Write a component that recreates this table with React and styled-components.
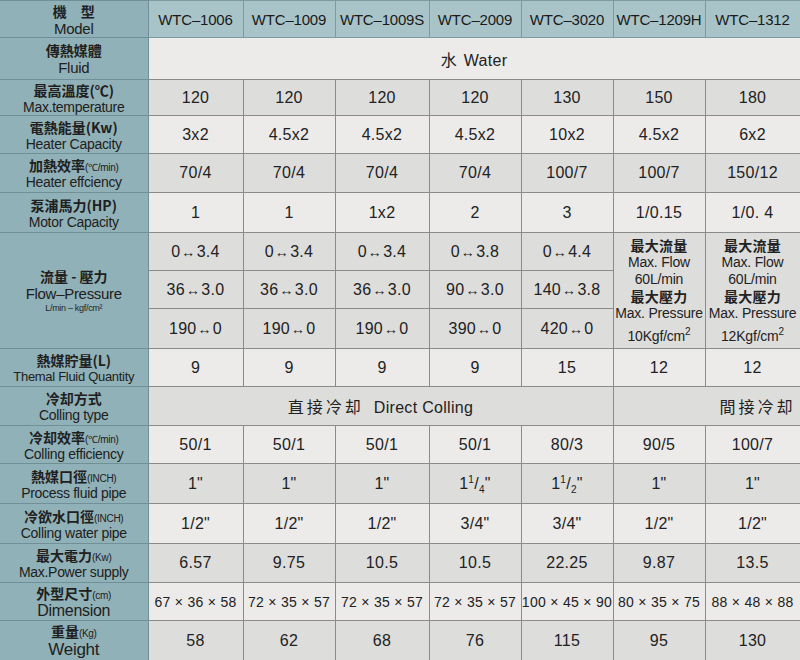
import React from 'react';
import styled, { createGlobalStyle } from 'styled-components';

const GlobalStyle = createGlobalStyle`
    html, body {
        margin: 0;
        padding: 0;
        background: #e9e9e7;
    }
    body {
        font-family: "Liberation Sans", Arial, "Noto Sans CJK TC", sans-serif;
        color: #262626;
    }
`;

const Sheet = styled.div`
    width: 800px;
    height: 660px;
    overflow: hidden;
    background: #e9e9e7;
`;

const Table = styled.table`
    width: 800px;
    border-collapse: collapse;
    table-layout: fixed;
`;

const Row = styled.tr`
    height: ${p => p.$h}px;
`;

const Label = styled.th`
    background: #90b1b7;
    border: 1px solid #6f9096;
    border-left: none;
    padding: 0;
    font-weight: normal;
    text-align: center;
    vertical-align: middle;
`;

const Zh = styled.div`
    font-family: "Noto Sans CJK TC", "Liberation Sans", sans-serif;
    font-size: 14px;
    font-weight: 700;
    letter-spacing: ${p => p.$spaced ? '14px' : '0'};
    padding-left: ${p => p.$spaced ? '14px' : '0'};
    color: #202020;
    line-height: 18px;
    height: 18px;
`;

const Unit = styled.span`
    font-family: "Liberation Sans", sans-serif;
    font-size: 10px;
    font-weight: normal;
    letter-spacing: -0.3px;
`;

const En = styled.div`
    font-size: ${p => p.$size || 14}px;
    letter-spacing: -0.3px;
    color: #202020;
    line-height: ${p => (p.$size || 14) + 2}px;
`;

const Small = styled.div`
    font-size: 9px;
    letter-spacing: -0.3px;
    line-height: 12px;
`;

const Head = styled.th`
    background: #a8c4c8;
    border: 1px solid #7c9ba1;
    font-weight: normal;
    font-size: 15px;
    letter-spacing: -0.2px;
    color: #1a1a1a;
    padding: 0;
    white-space: nowrap;
`;

const Cell = styled.td`
    background: ${p => p.$shade ? '#dddddc' : '#ecebea'};
    border: 1px solid #8b8b8b;
    text-align: ${p => p.$align || 'center'};
    padding: ${p => p.$align === 'right' ? '0 4px 0 0' : '0'};
    font-size: ${p => p.$size || 16}px;
    letter-spacing: 0.3px;
    color: #222;
    white-space: nowrap;
    vertical-align: middle;
`;

const Spec = styled.div`
    font-size: 14px;
    line-height: 17px;
    letter-spacing: -0.2px;
    white-space: nowrap;
`;

const SpecZh = styled.div`
    font-family: "Noto Sans CJK TC", sans-serif;
    font-size: 14px;
    font-weight: 700;
    line-height: 17px;
`;

const Zhv = styled.span`
    font-family: "Noto Sans CJK TC", sans-serif;
    letter-spacing: 3px;
    margin-right: ${p => p.$gap || 0}px;
`;

const Arrow = styled.span`
    font-size: 14px;
    margin: 0 1px;
`;

const Frac = styled.span`
    font-size: 10px;
`;

const cols = [148, 95, 92, 94, 92, 92, 92, 95];
const models = ['WTC–1006', 'WTC–1009', 'WTC–1009S', 'WTC–2009', 'WTC–3020', 'WTC–1209H', 'WTC–1312'];

const mixed = (whole, num, den) => (
    <>
        {whole}<sup><Frac>{num}</Frac></sup>/<sub><Frac>{den}</Frac></sub>"
    </>
);

const dims = ['67 × 36 × 58', '72 × 35 × 57', '72 × 35 × 57', '72 × 35 × 57', '100 × 45 × 90', '80 × 35 × 75', '88 × 48 × 88'];

const topRows = [
    { zh: '最高溫度(℃)', en: 'Max.temperature', h: 36, shade: true, vals: ['120', '120', '120', '120', '130', '150', '180'] },
    { zh: '電熱能量(Kw)', en: 'Heater Capacity', h: 38, vals: ['3x2', '4.5x2', '4.5x2', '4.5x2', '10x2', '4.5x2', '6x2'] },
    { zh: '加熱效率', unit: '(℃/min)', en: 'Heater effciency', h: 39, shade: true, vals: ['70/4', '70/4', '70/4', '70/4', '100/7', '100/7', '150/12'] },
    { zh: '泵浦馬力(HP)', en: 'Motor Capacity', h: 40, vals: ['1', '1', '1x2', '2', '3', '1/0.15', '1/0. 4'] },
];

const bottomRows = [
    { zh: '冷却效率', unit: '(℃/min)', en: 'Colling efficiency', h: 38, vals: ['50/1', '50/1', '50/1', '50/1', '80/3', '90/5', '100/7'] },
    { zh: '熱媒口徑', unit: '(INCH)', en: 'Process fluid pipe', h: 40, shade: true, vals: ['1"', '1"', '1"', mixed(1, 1, 4), mixed(1, 1, 2), '1"', '1"'] },
    { zh: '冷欲水口徑', unit: '(INCH)', en: 'Colling water pipe', h: 40, vals: ['1/2"', '1/2"', '1/2"', '3/4"', '3/4"', '1/2"', '1/2"'] },
    { zh: '最大電力', unit: '(Kw)', en: 'Max.Power supply', h: 39, shade: true, vals: ['6.57', '9.75', '10.5', '10.5', '22.25', '9.87', '13.5'] },
    { zh: '外型尺寸', unit: '(cm)', en: 'Dimension', enSize: 16, h: 38, size: 14, vals: dims },
    { zh: '重量', unit: '(Kg)', en: 'Weight', enSize: 17, h: 40, shade: true, vals: ['58', '62', '68', '76', '115', '95', '130'] },
];

const flow = [
    ['0', '3.4'], ['0', '3.4'], ['0', '3.4'], ['0', '3.8'], ['0', '4.4'],
    ['36', '3.0'], ['36', '3.0'], ['36', '3.0'], ['90', '3.0'], ['140', '3.8'],
    ['190', '0'], ['190', '0'], ['190', '0'], ['390', '0'], ['420', '0'],
];

function LabelCell({ zh, unit, en, enSize, rowSpan }) {
    return (
        <Label rowSpan={rowSpan}>
            <Zh>{zh}{unit && <Unit>{unit}</Unit>}</Zh>
            <En $size={enSize}>{en}</En>
        </Label>
    );
}

function DataRow({ row }) {
    return (
        <Row $h={row.h}>
            <LabelCell {...row} />
            {row.vals.map((v, i) => (
                <Cell key={i} $shade={row.shade} $size={row.size}>{v}</Cell>
            ))}
        </Row>
    );
}

function MaxSpec({ pressure }) {
    return (
        <>
            <SpecZh>最大流量</SpecZh>
            <Spec>Max. Flow</Spec>
            <Spec>60L/min</Spec>
            <SpecZh>最大壓力</SpecZh>
            <Spec>Max. Pressure</Spec>
            <Spec>{pressure}Kgf/cm<sup><Frac>2</Frac></sup></Spec>
        </>
    );
}

function FlowRows() {
    const heights = [38, 38, 40];
    return heights.map((h, r) => (
        <Row $h={h} key={r}>
            {r === 0 && (
                <Label rowSpan={3}>
                    <Zh>流量 - 壓力</Zh>
                    <En $size={15}>Flow–Pressure</En>
                    <Small>L/min – kgf/cm²</Small>
                </Label>
            )}
            {flow.slice(r * 5, r * 5 + 5).map(([a, b], i) => (
                <Cell key={i} $shade>
                    {a}<Arrow>↔</Arrow>{b}
                </Cell>
            ))}
            {r === 0 && (
                <>
                    <Cell rowSpan={3} $shade><MaxSpec pressure="10" /></Cell>
                    <Cell rowSpan={3} $shade><MaxSpec pressure="12" /></Cell>
                </>
            )}
        </Row>
    ));
}

export default function App() {
    return (
        <Sheet>
            <GlobalStyle />
            <Table>
                <colgroup>
                    {cols.map((w, i) => <col key={i} style={{ width: w }} />)}
                </colgroup>
                <tbody>
                    <Row $h={37}>
                        <Label>
                            <Zh $spaced>機型</Zh>
                            <En $size={15}>Model</En>
                        </Label>
                        {models.map(m => <Head key={m}>{m}</Head>)}
                    </Row>
                    <Row $h={42}>
                        <LabelCell zh="傳熱媒體" en="Fluid" enSize={15} />
                        <Cell colSpan={7}><Zhv $gap={4}>水</Zhv>Water</Cell>
                    </Row>
                    {topRows.map(r => <DataRow key={r.en} row={r} />)}
                    <FlowRows />
                    <DataRow row={{ zh: '熱媒貯量(L)', en: 'Themal Fluid Quantity', enSize: 13, h: 38, vals: ['9', '9', '9', '9', '15', '12', '12'] }} />
                    <Row $h={39}>
                        <LabelCell zh="冷却方式" en="Colling type" />
                        <Cell colSpan={5} $shade><Zhv $gap={10}>直接冷却</Zhv>Direct Colling</Cell>
                        <Cell colSpan={2} $shade $align="right"><Zhv>間接冷却</Zhv></Cell>
                    </Row>
                    {bottomRows.map(r => <DataRow key={r.en} row={r} />)}
                </tbody>
            </Table>
        </Sheet>
    );
}
